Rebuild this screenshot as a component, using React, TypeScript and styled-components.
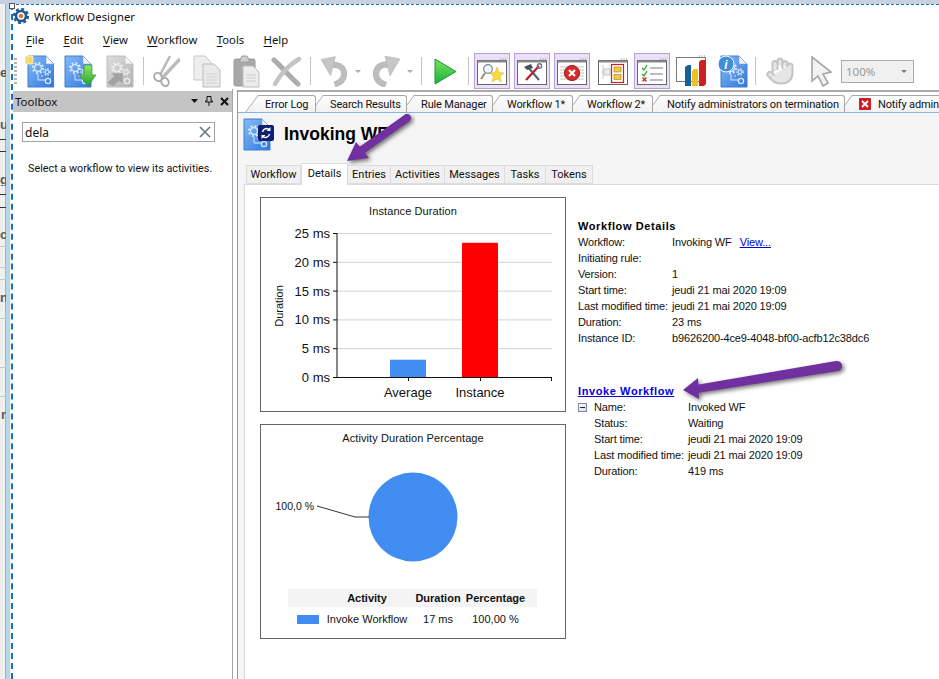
import React from 'react';
import styled, { createGlobalStyle } from 'styled-components';
import { Hand } from 'lucide-react';

const uiFont = `"Noto Sans", "Open Sans", sans-serif`;
const tabFont = `Roboto, "Noto Sans", sans-serif`;
const formFont = `"Liberation Sans", Arial, sans-serif`;
const BLUE = '#418cf0';

const GlobalStyle = createGlobalStyle`
  html, body { margin: 0; padding: 0; background: #fff; }
  * { box-sizing: border-box; }
`;

const Root = styled.div`
  position: relative;
  width: 939px;
  height: 679px;
  overflow: hidden;
  background: #fff;
  display: flex;
  flex-direction: column;
  color: #111;
`;

const TopBand = styled.div`
  height: 4px;
  flex: none;
  background: #c6d1e2;
`;

const Shell = styled.div`
  flex: 1;
  display: flex;
  min-height: 0;
`;

const LeftStrip = styled.div`
  width: 11px;
  flex: none;
  padding-right: 5px;
  display: flex;
  flex-direction: column;
  overflow: hidden;
  background: linear-gradient(90deg, #efefef 0 5px, #9fb4c4 5px 6px, #b9d6e4 6px 10px, #eef3f6 10px);
`;

const Sliver = styled.div<{ $mt: number }>`
  margin-top: ${(p) => p.$mt}px;
  height: 12px;
  font: bold 13px/12px ${formFont};
  color: #5a5a5a;
  text-align: right;
  overflow: hidden;
  flex: none;
  white-space: nowrap;
`;

const SliverLine = styled.div<{ $mt: number; $dark?: boolean }>`
  margin-top: ${(p) => p.$mt}px;
  height: 1px;
  flex: none;
  background: ${(p) => (p.$dark ? '#333' : '#c8c8c8')};
`;

const Window = styled.div`
  flex: 1;
  min-width: 0;
  display: flex;
  flex-direction: column;
  border-left: 2px dashed #1b6fc2;
  border-top: 1px dashed #1b6fc2;
`;

const TitleBar = styled.div`
  height: 22px;
  flex: none;
  display: flex;
  align-items: center;
  gap: 5px;
  font: 11.3px ${uiFont};
  color: #111;
`;

const MenuBar = styled.div`
  height: 24px;
  flex: none;
  padding-left: 13px;
  display: flex;
  align-items: center;
  gap: 19.4px;
  font: 11.3px ${uiFont};
`;

const MenuItem = styled.span`
  u { text-underline-offset: 2px; }
`;

const Toolbar = styled.div`
  height: 38px;
  flex: none;
  padding-top: 2px;
  display: flex;
  align-items: center;
`;

const Slot = styled.div<{ $w: number; $gap: number }>`
  width: ${(p) => p.$w}px;
  margin-left: ${(p) => p.$gap}px;
  flex: none;
  display: flex;
  justify-content: center;
  align-items: center;
`;

const Grip = styled.div`
  width: 3px;
  height: 27px;
  background: repeating-linear-gradient(180deg, #b5b5b5 0 2px, transparent 2px 4px);
`;

const ToolSep = styled.div<{ $gap: number }>`
  width: 1px;
  height: 28px;
  margin-left: ${(p) => p.$gap}px;
  flex: none;
  background: #c4c4c4;
`;

const Highlight = styled.div<{ $gap: number }>`
  width: 36px;
  height: 36px;
  margin-left: ${(p) => p.$gap}px;
  flex: none;
  display: flex;
  align-items: center;
  justify-content: center;
  background: #e9e1f5;
  border: 1px solid #b79fe2;
`;

const Caret = styled.div<{ $gap: number }>`
  margin-left: ${(p) => p.$gap}px;
  flex: none;
  width: 6px;
  height: 3px;
  border-left: 3px solid transparent;
  border-right: 3px solid transparent;
  border-top: 3px solid #aaa;
  align-self: center;
`;

const Combo = styled.div<{ $gap: number }>`
  width: 73px;
  height: 23px;
  margin-left: ${(p) => p.$gap}px;
  flex: none;
  padding: 0 4px;
  display: flex;
  align-items: center;
  justify-content: space-between;
  font: 11.5px ${uiFont};
  color: #9a9a9a;
  background: #f0f0f0;
  border: 1px solid #a9a9a9;
`;

const ComboCaret = styled.div`
  width: 6px;
  height: 3px;
  margin-right: 2px;
  border-left: 3px solid transparent;
  border-right: 3px solid transparent;
  border-top: 3px solid #777;
`;

const Body = styled.div`
  flex: 1;
  min-height: 0;
  display: flex;
`;

const Toolbox = styled.div`
  width: 220px;
  flex: none;
  border-right: 1px solid #a6a6a6;
  display: flex;
  flex-direction: column;
`;

const ToolboxHead = styled.div`
  height: 21px;
  flex: none;
  margin-top: 2px;
  padding: 0 3px 1px 2px;
  display: flex;
  align-items: center;
  justify-content: space-between;
  background: #c4c4c4;
  font: 11.5px ${uiFont};
`;

const HeadIcons = styled.div`
  display: flex;
  align-items: center;
  gap: 7px;
`;

const SearchBox = styled.div`
  width: 193px;
  height: 20px;
  margin: 10px 0 0 9px;
  padding: 0 3px 0 2px;
  display: flex;
  align-items: center;
  justify-content: space-between;
  border: 1px solid #a3a3a3;
  font: 12px ${uiFont};
`;

const ToolboxHint = styled.div`
  margin: 20px 0 0 15px;
  font: 10.8px ${tabFont};
  white-space: nowrap;
`;

const DocPane = styled.div`
  flex: 1;
  min-width: 0;
  margin: 1px 0 0 4px;
  display: flex;
  flex-direction: column;
  border-left: 1px solid #9a9a9a;
  border-top: 2px solid #ababab;
  background: #f5f5f5;
`;

const TabStrip = styled.div`
  height: 21px;
  flex: none;
  padding: 3px 0 0 13px;
  display: flex;
  overflow: hidden;
  background: #fff;
  border-bottom: 1px solid #86b6e6;
`;

const Tab = styled.div<{ $w: number; $z: number }>`
  position: relative;
  z-index: ${(p) => p.$z};
  width: ${(p) => p.$w}px;
  height: 17px;
  margin-left: 7px;
  flex: none;
  padding-left: 7px;
  display: flex;
  align-items: center;
  gap: 7px;
  font: 11px ${tabFont};
  letter-spacing: -0.15px;
  white-space: nowrap;
  background: linear-gradient(180deg, #fff, #f1f1f1);
  border-top: 1px solid #a8a8a8;
  border-right: 1px solid #a8a8a8;
  border-top-right-radius: 3px;

  &::before {
    content: '';
    position: absolute;
    z-index: -1;
    top: -1px;
    bottom: 0;
    left: 0;
    width: 10px;
    transform-origin: top left;
    transform: skewX(-37deg);
    background: inherit;
    border-left: 1px solid #a8a8a8;
    border-top: 1px solid #a8a8a8;
  }
`;

const DocTitle = styled.div`
  height: 51px;
  flex: none;
  padding: 0 0 9px 5px;
  display: flex;
  align-items: center;
  gap: 9px;
  font: bold 17.5px ${formFont};
  color: #000;
`;

const InnerTabs = styled.div`
  height: 20px;
  flex: none;
  padding-left: 8px;
  display: flex;
  align-items: flex-end;
  position: relative;
  z-index: 1;
`;

const InnerTab = styled.div<{ $w: number; $active?: boolean }>`
  width: ${(p) => p.$w}px;
  height: ${(p) => (p.$active ? 22 : 19)}px;
  margin-bottom: ${(p) => (p.$active ? -1 : 0)}px;
  flex: none;
  display: flex;
  align-items: center;
  justify-content: center;
  font: 11px ${tabFont};
  padding-bottom: ${(p) => (p.$active ? 3 : 0)}px;
  background: ${(p) => (p.$active ? '#fff' : '#f0f0f0')};
  border: 1px solid #dcdcdc;
  border-bottom: ${(p) => (p.$active ? 'none' : '1px solid #dcdcdc')};
  border-left-width: ${(p) => (p.$active ? 1 : 0)}px;
  &:first-child { border-left-width: 1px; }
`;

const Content = styled.div`
  flex: 1;
  min-height: 0;
  margin-left: 6px;
  padding: 12px 0 0 15px;
  display: flex;
  gap: 12px;
  background: #fff;
  border-left: 1px solid #dcdcdc;
  border-top: 1px solid #dcdcdc;
`;

const Charts = styled.div`
  width: 306px;
  flex: none;
  display: flex;
  flex-direction: column;
  gap: 12px;
`;

const ChartPanel = styled.div`
  height: 215px;
  flex: none;
  border: 1px solid #666;
  display: flex;
  flex-direction: column;
`;

const ChartTitle = styled.div`
  height: 26px;
  flex: none;
  display: flex;
  align-items: center;
  justify-content: center;
  font: 11px ${formFont};
  letter-spacing: 0.1px;
`;

const ChartSvg = styled.svg`
  display: block;
  flex: none;
  font-family: ${formFont};
`;

const LegendGrid = styled.div<{ $head?: boolean }>`
  width: 249px;
  height: 18px;
  margin: ${(p) => (p.$head ? '0' : '3px')} 0 0 27px;
  flex: none;
  display: grid;
  grid-template-columns: 34px 90px 52px 63px 10px;
  align-items: center;
  text-align: center;
  white-space: nowrap;
  font: ${(p) => (p.$head ? 'bold' : 'normal')} 11px ${formFont};
  background: ${(p) => (p.$head ? '#f4f4f4' : 'transparent')};
`;

const Swatch = styled.div`
  width: 22px;
  height: 9px;
  margin-left: 9px;
  background: ${BLUE};
`;

const Details = styled.div`
  margin-top: 21px;
  font: 11px ${formFont};
  letter-spacing: -0.13px;
  white-space: nowrap;
`;

const DetailHead = styled.div<{ $mt?: number }>`
  height: 16px;
  line-height: 16px;
  margin-top: ${(p) => p.$mt ?? 0}px;
  font-weight: bold;
  letter-spacing: 0.6px;
  color: #000;
`;

const DetailLink = styled.a`
  color: #0000e6;
  text-decoration: underline;
`;

const DetailRow = styled.div<{ $indent?: boolean }>`
  height: 16px;
  line-height: 16px;
  display: grid;
  grid-template-columns: ${(p) => (p.$indent ? '16px' : '0')} 94px 1fr;
  align-items: center;
`;

const Expander = styled.div`
  width: 9px;
  height: 9px;
  display: flex;
  align-items: center;
  justify-content: center;
  border: 1px solid #7d8a9a;
  background: linear-gradient(135deg, #fff, #d6dde6);

  &::after {
    content: '';
    width: 5px;
    height: 1px;
    background: #223;
  }
`;

const ViewLink = styled(DetailLink)`
  margin-left: 5px;
`;

const Handle = styled.div`
  position: absolute;
  left: 9px;
  top: 3px;
  width: 6px;
  height: 6px;
  background: #fff;
  border: 1px solid #555;
`;

const Overlay = styled.svg`
  position: absolute;
  inset: 0;
  pointer-events: none;
  filter: drop-shadow(2px 2px 2px rgba(0, 0, 0, 0.55));
`;

/* ---- icons ---- */

function Gears({ fill = '#d8e8fb' }: { fill?: string }) {
  return (
    <g fill="none" stroke={fill}>
      <circle cx="11" cy="13" r="3.4" strokeWidth="1.2" />
      <circle cx="11" cy="13" r="5" strokeWidth="2" strokeDasharray="2 1.9" />
      <circle cx="20" cy="17" r="1.8" strokeWidth="1" />
      <circle cx="20" cy="17" r="3" strokeWidth="1.4" strokeDasharray="1.5 1.3" />
      <circle cx="21" cy="26" r="2.6" strokeWidth="1.3" />
      <path d="M11 19v6h7M14 21h2" strokeWidth="1" />
    </g>
  );
}

function DocShape({ id, grey = false }: { id: string; grey?: boolean }) {
  return (
    <>
      <defs>
        <linearGradient id={id} x1="0" y1="0" x2="1" y2="1">
          <stop offset="0" stopColor={grey ? '#dcdcdc' : '#86bbf5'} />
          <stop offset="1" stopColor={grey ? '#b4b4b4' : '#3078de'} />
        </linearGradient>
      </defs>
      <path d="M1 1H19L27 9V32H1Z" fill={`url(#${id})`} stroke={grey ? '#bdbdbd' : '#3d7fd0'} />
      <path d="M19 1V9H27Z" fill="#f2f6fb" stroke={grey ? '#bbb' : '#7da7d8'} strokeWidth=".6" />
    </>
  );
}

const NewIcon = () => (
  <svg width="29" height="33" viewBox="0 0 29 33">
    <g transform="translate(2 0)">
      <DocShape id="docNew" />
      <Gears />
    </g>
    <rect x="0" y="1" width="8" height="8" fill="#f7d96b" stroke="#fff" strokeDasharray="1.5 1" />
  </svg>
);

const DownloadIcon = () => (
  <svg width="32" height="33" viewBox="0 0 32 33">
    <DocShape id="docDown" />
    <Gears />
    <defs>
      <linearGradient id="greenDown" x1="0" y1="0" x2="0" y2="1">
        <stop offset="0" stopColor="#8fe36a" />
        <stop offset="1" stopColor="#1fa52a" />
      </linearGradient>
    </defs>
    <path d="M20 10H28V20H32L24 31 15 20H20Z" fill="url(#greenDown)" stroke="#2e9a34" strokeWidth=".7" />
  </svg>
);

const GreyDocIcon = () => (
  <svg width="28" height="33" viewBox="0 0 28 33">
    <DocShape id="docGrey" grey />
    <Gears fill="#efefef" />
    <path d="M1 28L8 21 5 18H17V29L13 26 7 32Z" fill="#a3a3a3" stroke="#c9c9c9" strokeWidth=".6" />
  </svg>
);

const ScissorsIcon = () => (
  <svg width="27" height="32" viewBox="0 0 27 32" fill="none">
    <path d="M17 1L7 20" stroke="#bbb" strokeWidth="2.6" />
    <path d="M27 4L10 22" stroke="#bcbcbc" strokeWidth="3.4" />
    <ellipse cx="5" cy="22" rx="3.6" ry="4.4" stroke="#a9a9a9" strokeWidth="1.8" transform="rotate(-30 5 22)" />
    <ellipse cx="12" cy="27" rx="3.6" ry="4.2" stroke="#a9a9a9" strokeWidth="1.8" transform="rotate(-30 12 27)" />
  </svg>
);

const CopyIcon = () => (
  <svg width="28" height="33" viewBox="0 0 28 33">
    <path d="M1 1H12L18 7V25H1Z" fill="#eee" stroke="#c9c9c9" />
    <path d="M10 9H21L27 15V32H10Z" fill="#e9e9e9" stroke="#bdbdbd" />
    <path d="M13 19H24M13 22H24M13 25H24M13 28H24" stroke="#d2d2d2" />
  </svg>
);

const PasteIcon = () => (
  <svg width="27" height="33" viewBox="0 0 27 33">
    <rect x="1" y="4" width="21" height="27" rx="2" fill="#a8a8a8" stroke="#9a9a9a" />
    <path d="M7 5L9 1H14L16 5V7H7Z" fill="#cdcdcd" stroke="#9f9f9f" />
    <path d="M10 11H20L26 17V32H10Z" fill="#ececec" stroke="#bdbdbd" />
    <path d="M13 20H23M13 23H23M13 26H23" stroke="#d0d0d0" />
  </svg>
);

const DeleteIcon = () => (
  <svg width="31" height="31" viewBox="0 0 31 31" fill="none">
    <path d="M3 4C10 10 20 22 27 28" stroke="#adadad" strokeWidth="5" strokeLinecap="round" />
    <path d="M28 3C18 9 9 19 4 28" stroke="#c4c4c4" strokeWidth="4.4" strokeLinecap="round" />
  </svg>
);

const UndoIcon = ({ flip = false }: { flip?: boolean }) => (
  <svg width="27" height="31" viewBox="0 0 27 31" fill="none" style={flip ? { transform: 'scaleX(-1)' } : undefined}>
    <path d="M8 10C17 6 24 11 24 18C24 24 20 27 14 29" stroke="#bdbdbd" strokeWidth="6.4" />
    <path d="M0 3L15 0 10 20Z" fill="#c6c6c6" stroke="#b5b5b5" strokeWidth=".6" />
  </svg>
);

const PlayIcon = () => (
  <svg width="23" height="27" viewBox="0 0 23 27">
    <defs>
      <linearGradient id="playFill" x1="0" y1="0" x2="0" y2="1">
        <stop offset="0" stopColor="#7fe05f" />
        <stop offset="1" stopColor="#17b23a" />
      </linearGradient>
    </defs>
    <path d="M1 1L22 13.5 1 26Z" fill="url(#playFill)" stroke="#1f9a35" />
  </svg>
);

const WinFrame = ({ children }: { children: React.ReactNode }) => (
  <svg width="30" height="27" viewBox="0 0 30 27">
    <rect x=".5" y="2.5" width="29" height="24" fill="#fff" stroke="#666" />
    <rect x=".5" y="2.5" width="29" height="2" fill="#8a8a8a" />
    <path d="M23 1h1M25.5 1h1M28 1h1" stroke="#888" />
    {children}
  </svg>
);

const SearchStarIcon = () => (
  <WinFrame>
    <circle cx="11" cy="11" r="4.4" fill="#eef5fb" stroke="#7c8894" strokeWidth="1.2" />
    <path d="M8 15L4 21" stroke="#96887a" strokeWidth="2" />
    <path d="M20 9L22 14.5 27 15 23 18.5 24.5 24 20 21 15 24 16.5 18.5 13 15 18 14.5Z" fill="#f8dc3c" stroke="#d3b020" strokeWidth=".5" />
  </WinFrame>
);

const ToolsIcon = () => (
  <WinFrame>
    <path d="M10 8L22 22" stroke="#53606c" strokeWidth="2" />
    <path d="M7 9L14 6 16 10 10 12Z" fill="#46525e" />
    <path d="M22 8L9 22" stroke="#b3202a" strokeWidth="2.2" />
    <circle cx="22.5" cy="8" r="2.2" fill="none" stroke="#6c7883" strokeWidth="1.4" />
  </WinFrame>
);

const ErrorIcon = () => (
  <WinFrame>
    <path d="M3 9H27M3 12H27M3 15H27M3 18H27M3 21H27" stroke="#c4c4c4" />
    <circle cx="15" cy="15" r="7.6" fill="#d52b2b" stroke="#a81e1e" />
    <path d="M12 12L18 18M18 12L12 18" stroke="#fff" strokeWidth="2.2" />
  </WinFrame>
);

const FlowIcon = () => (
  <WinFrame>
    <path d="M3 14H7M13 14H16" stroke="#ccc" />
    <path d="M5 7V21" stroke="#ccc" />
    <rect x="6" y="11" width="6" height="6" fill="#eee" stroke="#c6c6c6" />
    <rect x="13.5" y="6.5" width="12" height="18" fill="#fff" stroke="#e01818" strokeWidth="1.2" />
    <rect x="16" y="9" width="7" height="5" fill="#f3c94a" stroke="#9a7d18" strokeWidth=".6" />
    <rect x="16" y="16.5" width="7" height="5" fill="#f3c94a" stroke="#9a7d18" strokeWidth=".6" />
  </WinFrame>
);

const ChecklistIcon = () => (
  <WinFrame>
    <path d="M5 10L7 12 10 7M5 16L7 18 10 13" stroke="#2ea82e" strokeWidth="1.3" fill="none" />
    <path d="M5.5 19.5L9.5 23.5M9.5 19.5L5.5 23.5" stroke="#d42020" strokeWidth="1.3" />
    <path d="M13 10H26M13 16H26M13 22H26" stroke="#7a7a8a" strokeWidth="1.1" />
  </WinFrame>
);

const BarsIcon = () => (
  <svg width="31" height="32" viewBox="0 0 31 32">
    <rect x=".5" y="2.5" width="29" height="24" fill="#fff" stroke="#7a7a7a" />
    <path d="M23 1h1M25.5 1h1M28 1h1" stroke="#888" />
    <path d="M9 12L12 10H15V31H9Z" fill="#14609c" />
    <path d="M16 16L18 14H22V31H16Z" fill="#efc21b" />
    <path d="M23 7L25 5H30V29L28 31H23Z" fill="#cf1f1f" />
  </svg>
);

const InfoDocIcon = () => (
  <svg width="31" height="33" viewBox="0 0 31 33">
    <g transform="translate(3 0)">
      <DocShape id="docInfo" />
      <Gears />
    </g>
    <circle cx="9" cy="9" r="8" fill="#3f8fd8" stroke="#fff" />
    <text x="9" y="13.5" textAnchor="middle" fontFamily={formFont} fontStyle="italic" fontWeight="bold" fontSize="12" fill="#fff">i</text>
  </svg>
);

const CursorIcon = () => (
  <svg width="22" height="31" viewBox="0 0 22 31">
    <path d="M2 1L21 16 13 18 18 27 13 30 8 20 2 25Z" fill="#f2f2f2" stroke="#a9a9a9" strokeWidth="1.7" />
  </svg>
);

const AppGear = () => (
  <svg width="16" height="16" viewBox="0 0 16 16">
    <circle cx="8" cy="8" r="5" fill="#fff" stroke="#1d5a94" strokeWidth="2.6" />
    <circle cx="8" cy="8" r="7" fill="none" stroke="#1d5a94" strokeWidth="2.2" strokeDasharray="3 2.5" />
    <circle cx="8" cy="8" r="2.2" fill="#e8702a" />
  </svg>
);

const WorkflowBadgeIcon = () => (
  <svg width="32" height="33" viewBox="0 0 32 33">
    <DocShape id="docBadge" />
    <Gears />
    <rect x="15" y="7" width="16" height="16" rx="2" fill="#0d1f6e" />
    <path d="M19.5 14A4 4 0 0 1 26.5 12M26.5 16A4 4 0 0 1 19.5 18" fill="none" stroke="#fff" strokeWidth="1.5" />
    <path d="M27.5 9V13H23.5ZM18.5 21V17H22.5Z" fill="#fff" />
  </svg>
);

const CloseBadge = () => (
  <svg width="12" height="12" viewBox="0 0 12 12" style={{ flex: 'none' }}>
    <rect width="12" height="12" rx="1" fill="#c8202a" />
    <path d="M3 3L9 9M9 3L3 9" stroke="#fff" strokeWidth="1.8" />
  </svg>
);

const ClearIcon = () => (
  <svg width="12" height="12" viewBox="0 0 12 12">
    <path d="M1 1L11 11M11 1L1 11" stroke="#6d7480" strokeWidth="1.6" />
  </svg>
);

const PanelMenuIcon = () => (
  <svg width="7" height="4" viewBox="0 0 7 4"><path d="M0 0H7L3.5 4Z" fill="#111" /></svg>
);

const PinIcon = () => (
  <svg width="8" height="10" viewBox="0 0 8 10">
    <path d="M2 .5H6V5H7.5V6H.5V5H2ZM4 6V10" fill="none" stroke="#111" />
  </svg>
);

const PanelCloseIcon = () => (
  <svg width="9" height="9" viewBox="0 0 9 9">
    <path d="M1 1L8 8M8 1L1 8" stroke="#111" strokeWidth="2" />
  </svg>
);

/* ---- data ---- */

const docTabs = [
  { label: 'Error Log', w: 58 },
  { label: 'Search Results', w: 84 },
  { label: 'Rule Manager', w: 79 },
  { label: 'Workflow 1*', w: 73 },
  { label: 'Workflow 2*', w: 73 },
  { label: 'Notify administrators on termination', w: 185 },
  { label: 'Notify administrators', w: 140, closable: true }
];

const innerTabs = [
  { label: 'Workflow', w: 55 },
  { label: 'Details', w: 47, active: true },
  { label: 'Entries', w: 43 },
  { label: 'Activities', w: 54 },
  { label: 'Messages', w: 60 },
  { label: 'Tasks', w: 41 },
  { label: 'Tokens', w: 47 }
];

const menu = ['File', 'Edit', 'View', 'Workflow', 'Tools', 'Help'];

const ticks = ['25 ms', '20 ms', '15 ms', '10 ms', '5 ms', '0 ms'];
const PLOT_TOP = 9;
const PLOT_BOTTOM = 153;
const PLOT_LEFT = 76;
const PLOT_RIGHT = 291;

function BarChart() {
  const scale = (PLOT_BOTTOM - PLOT_TOP) / 25;
  const bars = [
    { x: 129, v: 3, color: BLUE, label: 'Average' },
    { x: 201, v: 23.3, color: '#ff0000', label: 'Instance' }
  ];
  return (
    <ChartSvg width="304" height="187" viewBox="0 0 304 187">
      <text transform="translate(22 82) rotate(-90)" textAnchor="middle" fontSize="11" fill="#111">Duration</text>
      {ticks.map((t, i) => {
        const y = PLOT_TOP + i * ((PLOT_BOTTOM - PLOT_TOP) / 5);
        return (
          <g key={t}>
            {i < 5 && <line x1={PLOT_LEFT} x2={PLOT_RIGHT} y1={y + 0.5} y2={y + 0.5} stroke="#d2d2d2" />}
            <line x1={PLOT_LEFT - 4} x2={PLOT_LEFT} y1={y + 0.5} y2={y + 0.5} stroke="#111" />
            <text x={PLOT_LEFT - 7} y={y + 5} textAnchor="end" fontSize="13" fill="#111">{t}</text>
          </g>
        );
      })}
      {bars.map((b) => (
        <g key={b.label}>
          <rect x={b.x} y={PLOT_BOTTOM - b.v * scale} width="36" height={b.v * scale} fill={b.color} />
          <line x1={b.x + 18.5} x2={b.x + 18.5} y1={PLOT_BOTTOM} y2={PLOT_BOTTOM + 4} stroke="#111" />
          <text x={b.x + 18} y={PLOT_BOTTOM + 20} textAnchor="middle" fontSize="13" fill="#111">{b.label}</text>
        </g>
      ))}
      <line x1={PLOT_LEFT} x2={PLOT_LEFT} y1={PLOT_TOP} y2={PLOT_BOTTOM} stroke="#111" />
      <line x1={PLOT_LEFT} x2={PLOT_RIGHT} y1={PLOT_BOTTOM + 0.5} y2={PLOT_BOTTOM + 0.5} stroke="#111" />
      <line x1={PLOT_RIGHT - 0.5} x2={PLOT_RIGHT - 0.5} y1={PLOT_BOTTOM} y2={PLOT_BOTTOM + 4} stroke="#111" />
    </ChartSvg>
  );
}

function PieChart() {
  return (
    <ChartSvg width="304" height="138" viewBox="0 0 304 138">
      <circle cx="152" cy="66" r="44.5" fill={BLUE} />
      <path d="M56 55L94 66H108" fill="none" stroke="#333" />
      <text x="53" y="59" textAnchor="end" fontSize="10.5" fill="#111">100,0 %</text>
    </ChartSvg>
  );
}

const topRows: [string, React.ReactNode][] = [
  ['Initiating rule:', ''],
  ['Version:', '1'],
  ['Start time:', 'jeudi 21 mai 2020 19:09'],
  ['Last modified time:', 'jeudi 21 mai 2020 19:09'],
  ['Duration:', '23 ms'],
  ['Instance ID:', 'b9626200-4ce9-4048-bf00-acfb12c38dc6']
];

const invokeRows: [string, string][] = [
  ['Name:', 'Invoked WF'],
  ['Status:', 'Waiting'],
  ['Start time:', 'jeudi 21 mai 2020 19:09'],
  ['Last modified time:', 'jeudi 21 mai 2020 19:09'],
  ['Duration:', '419 ms']
];

export default function App() {
  return (
    <Root>
      <GlobalStyle />
      <TopBand />
      <Shell>
        <LeftStrip>
          <Sliver $mt={63}>e</Sliver>
          <Sliver $mt={40}>u</Sliver>
          <SliverLine $mt={8} $dark />
          <SliverLine $mt={11} $dark />
          <Sliver $mt={22}>g</Sliver>
          <SliverLine $mt={8} $dark />
          <SliverLine $mt={12} $dark />
          <Sliver $mt={21}>c</Sliver>
          <SliverLine $mt={5} />
          <SliverLine $mt={20} />
          <SliverLine $mt={11} />
          <Sliver $mt={12}>n</Sliver>
          <SliverLine $mt={14} />
          <SliverLine $mt={48} />
          <SliverLine $mt={28} />
          <Sliver $mt={12}>r</Sliver>
        </LeftStrip>
        <Window>
          <TitleBar>
            <AppGear />
            Workflow Designer
          </TitleBar>
          <MenuBar>
            {menu.map((m) => (
              <MenuItem key={m}>
                <u>{m[0]}</u>
                {m.slice(1)}
              </MenuItem>
            ))}
          </MenuBar>
          <Toolbar>
            <Slot $w={3} $gap={1}><Grip /></Slot>
            <Slot $w={29} $gap={8}><NewIcon /></Slot>
            <Slot $w={32} $gap={10}><DownloadIcon /></Slot>
            <Slot $w={28} $gap={10}><GreyDocIcon /></Slot>
            <ToolSep $gap={9} />
            <Slot $w={27} $gap={9}><ScissorsIcon /></Slot>
            <Slot $w={28} $gap={13}><CopyIcon /></Slot>
            <Slot $w={27} $gap={12}><PasteIcon /></Slot>
            <Slot $w={31} $gap={11}><DeleteIcon /></Slot>
            <ToolSep $gap={8} />
            <Slot $w={26} $gap={10}><UndoIcon /></Slot>
            <Caret $gap={8} />
            <Slot $w={28} $gap={11}><UndoIcon flip /></Slot>
            <Caret $gap={7} />
            <ToolSep $gap={8} />
            <Slot $w={23} $gap={12}><PlayIcon /></Slot>
            <ToolSep $gap={11} />
            <Highlight $gap={5}><SearchStarIcon /></Highlight>
            <Highlight $gap={4}><ToolsIcon /></Highlight>
            <Highlight $gap={4}><ErrorIcon /></Highlight>
            <Slot $w={30} $gap={8}><FlowIcon /></Slot>
            <Highlight $gap={6}><ChecklistIcon /></Highlight>
            <Slot $w={31} $gap={6}><BarsIcon /></Slot>
            <Slot $w={31} $gap={10}><InfoDocIcon /></Slot>
            <ToolSep $gap={7} />
            <Slot $w={30} $gap={9}><Hand size={30} color="#c4c4c4" fill="#e6e6e6" strokeWidth={1.6} /></Slot>
            <Slot $w={22} $gap={15}><CursorIcon /></Slot>
            <Combo $gap={9}>
              100%
              <ComboCaret />
            </Combo>
          </Toolbar>
          <Body>
            <Toolbox>
              <ToolboxHead>
                Toolbox
                <HeadIcons>
                  <PanelMenuIcon />
                  <PinIcon />
                  <PanelCloseIcon />
                </HeadIcons>
              </ToolboxHead>
              <SearchBox>
                dela
                <ClearIcon />
              </SearchBox>
              <ToolboxHint>Select a workflow to view its activities.</ToolboxHint>
            </Toolbox>
            <DocPane>
              <TabStrip>
                {docTabs.map((t, i) => (
                  <Tab key={t.label} $w={t.w} $z={docTabs.length - i}>
                    {t.closable && <CloseBadge />}
                    {t.label}
                  </Tab>
                ))}
              </TabStrip>
              <DocTitle>
                <WorkflowBadgeIcon />
                Invoking WF
              </DocTitle>
              <InnerTabs>
                {innerTabs.map((t) => (
                  <InnerTab key={t.label} $w={t.w} $active={t.active}>{t.label}</InnerTab>
                ))}
              </InnerTabs>
              <Content>
                <Charts>
                  <ChartPanel>
                    <ChartTitle>Instance Duration</ChartTitle>
                    <BarChart />
                  </ChartPanel>
                  <ChartPanel>
                    <ChartTitle>Activity Duration Percentage</ChartTitle>
                    <PieChart />
                    <LegendGrid $head>
                      <span />
                      <span>Activity</span>
                      <span>Duration</span>
                      <span>Percentage</span>
                    </LegendGrid>
                    <LegendGrid>
                      <Swatch />
                      <span>Invoke Workflow</span>
                      <span>17 ms</span>
                      <span>100,00 %</span>
                    </LegendGrid>
                  </ChartPanel>
                </Charts>
                <Details>
                  <DetailHead>Workflow Details</DetailHead>
                  <DetailRow>
                    <span />
                    <span>Workflow:</span>
                    <span>Invoking WF <ViewLink>View...</ViewLink></span>
                  </DetailRow>
                  {topRows.map(([label, value]) => (
                    <DetailRow key={label}>
                      <span />
                      <span>{label}</span>
                      <span>{value}</span>
                    </DetailRow>
                  ))}
                  <DetailHead $mt={37}><DetailLink>Invoke Workflow</DetailLink></DetailHead>
                  {invokeRows.map(([label, value], i) => (
                    <DetailRow key={label} $indent>
                      {i === 0 ? <Expander /> : <span />}
                      <span>{label}</span>
                      <span>{value}</span>
                    </DetailRow>
                  ))}
                </Details>
              </Content>
            </DocPane>
          </Body>
        </Window>
      </Shell>
      <Handle />
      <Overlay width="939" height="679" viewBox="0 0 939 679">
        <path d="M407 118L362 150" stroke="#7030a0" strokeWidth="8" strokeLinecap="round" />
        <path d="M347 161L356 142 369 158Z" fill="#7030a0" />
        <path d="M696 385L836 361A5 5 0 0 1 838 371L697 393Z" fill="#7030a0" />
        <path d="M683 390L698 378 699 399Z" fill="#7030a0" />
      </Overlay>
    </Root>
  );
}
